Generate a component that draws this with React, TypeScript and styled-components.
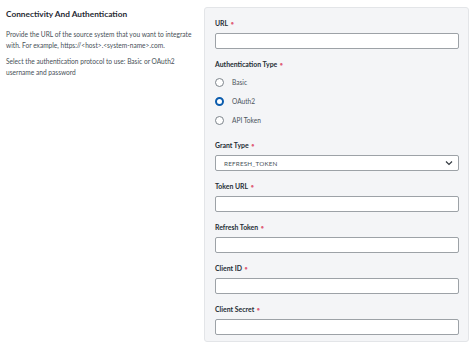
import React from "react";
import styled, { createGlobalStyle } from "styled-components";

const Global = createGlobalStyle`
  html, body { margin: 0; padding: 0; background: #ffffff; }
  body { font-family: Lato, "Liberation Sans", sans-serif; color: #333a40; }
  * { box-sizing: border-box; }
`;

const Page = styled.div`
  width: 474px;
  height: 349px;
  display: grid;
  grid-template-columns: 204px 265px;
  padding: 7px 0 0 0;
`;

const Intro = styled.div`
  padding: 1px 8px 0 6px;
`;

const Title = styled.h2`
  margin: 0 0 9px 0;
  font-size: 8.3px;
  font-weight: 700;
  color: #1f2a33;
  line-height: 12px;
`;

const Para = styled.p`
  margin: 0 0 6px 0;
  font-size: 6.6px;
  line-height: 10.5px;
  color: #474f57;
`;

const Panel = styled.div`
  height: 335px;
  background: #f4f5f7;
  border: 1px solid #e3e5e8;
  border-radius: 3px;
  padding: 10px 9px 0 10px;
  display: flex;
  flex-direction: column;
`;

const Field = styled.div<{ $gap?: number }>`
  display: flex;
  flex-direction: column;
  margin-bottom: ${(p) => p.$gap ?? 10}px;
`;

const Label = styled.label`
  font-size: 6.9px;
  font-weight: 700;
  color: #252d35;
  line-height: 10px;
  margin-bottom: 5px;
  display: flex;
  align-items: center;
`;

const Req = styled.span`
  color: #e0607a;
  margin-left: 2.5px;
  font-size: 5.5px;
`;

const Input = styled.div`
  height: 16px;
  background: #ffffff;
  border: 1px solid #9da2a7;
  border-radius: 2px;
`;

const Select = styled.div`
  height: 16px;
  background: #ffffff;
  border: 1px solid #9da2a7;
  border-radius: 2px;
  display: flex;
  align-items: center;
  justify-content: space-between;
  padding: 0 5px 0 8px;
  font-size: 6.3px;
  color: #4b545c;
  letter-spacing: 0.2px;
`;

const RadioGroup = styled.div`
  display: flex;
  flex-direction: column;
  gap: 9px;
  margin-top: 3px;
`;

const RadioRow = styled.div`
  display: flex;
  align-items: center;
  height: 10px;
  font-size: 6.6px;
  color: #4b545c;
`;

const Circle = styled.span<{ $on?: boolean }>`
  width: 9px;
  height: 9px;
  border-radius: 50%;
  margin-right: 8px;
  background: #ffffff;
  border: ${(p) => (p.$on ? "2.5px solid #0b5cad" : "1px solid #7d848b")};
`;

const Chevron = () => (
  <svg width="8" height="6" viewBox="0 0 8 6">
    <path d="M1 1.5 L4 4.5 L7 1.5" fill="none" stroke="#333a40" strokeWidth="1.2" />
  </svg>
);

const TextField = ({ label, gap }: { label: string; gap?: number }) => (
  <Field $gap={gap}>
    <Label>
      {label}
      <Req>•</Req>
    </Label>
    <Input />
  </Field>
);

export default function App() {
  return (
    <>
      <Global />
      <Page>
        <Intro>
          <Title>Connectivity And Authentication</Title>
          <Para>
            Provide the URL of the source system that you want to integrate
            with. For example, https://&lt;host&gt;.&lt;system-name&gt;.com.
          </Para>
          <Para>
            Select the authentication protocol to use: Basic or OAuth2
            username and password
          </Para>
        </Intro>
        <Panel>
          <TextField label="URL" />
          <Field $gap={15}>
            <Label>
              Authentication Type<Req>•</Req>
            </Label>
            <RadioGroup>
              <RadioRow>
                <Circle />
                Basic
              </RadioRow>
              <RadioRow>
                <Circle $on />
                OAuth2
              </RadioRow>
              <RadioRow>
                <Circle />
                API Token
              </RadioRow>
            </RadioGroup>
          </Field>
          <Field>
            <Label>
              Grant Type<Req>•</Req>
            </Label>
            <Select>
              REFRESH_TOKEN
              <Chevron />
            </Select>
          </Field>
          <TextField label="Token URL" />
          <TextField label="Refresh Token" />
          <TextField label="Client ID" />
          <TextField label="Client Secret" />
        </Panel>
      </Page>
    </>
  );
}
